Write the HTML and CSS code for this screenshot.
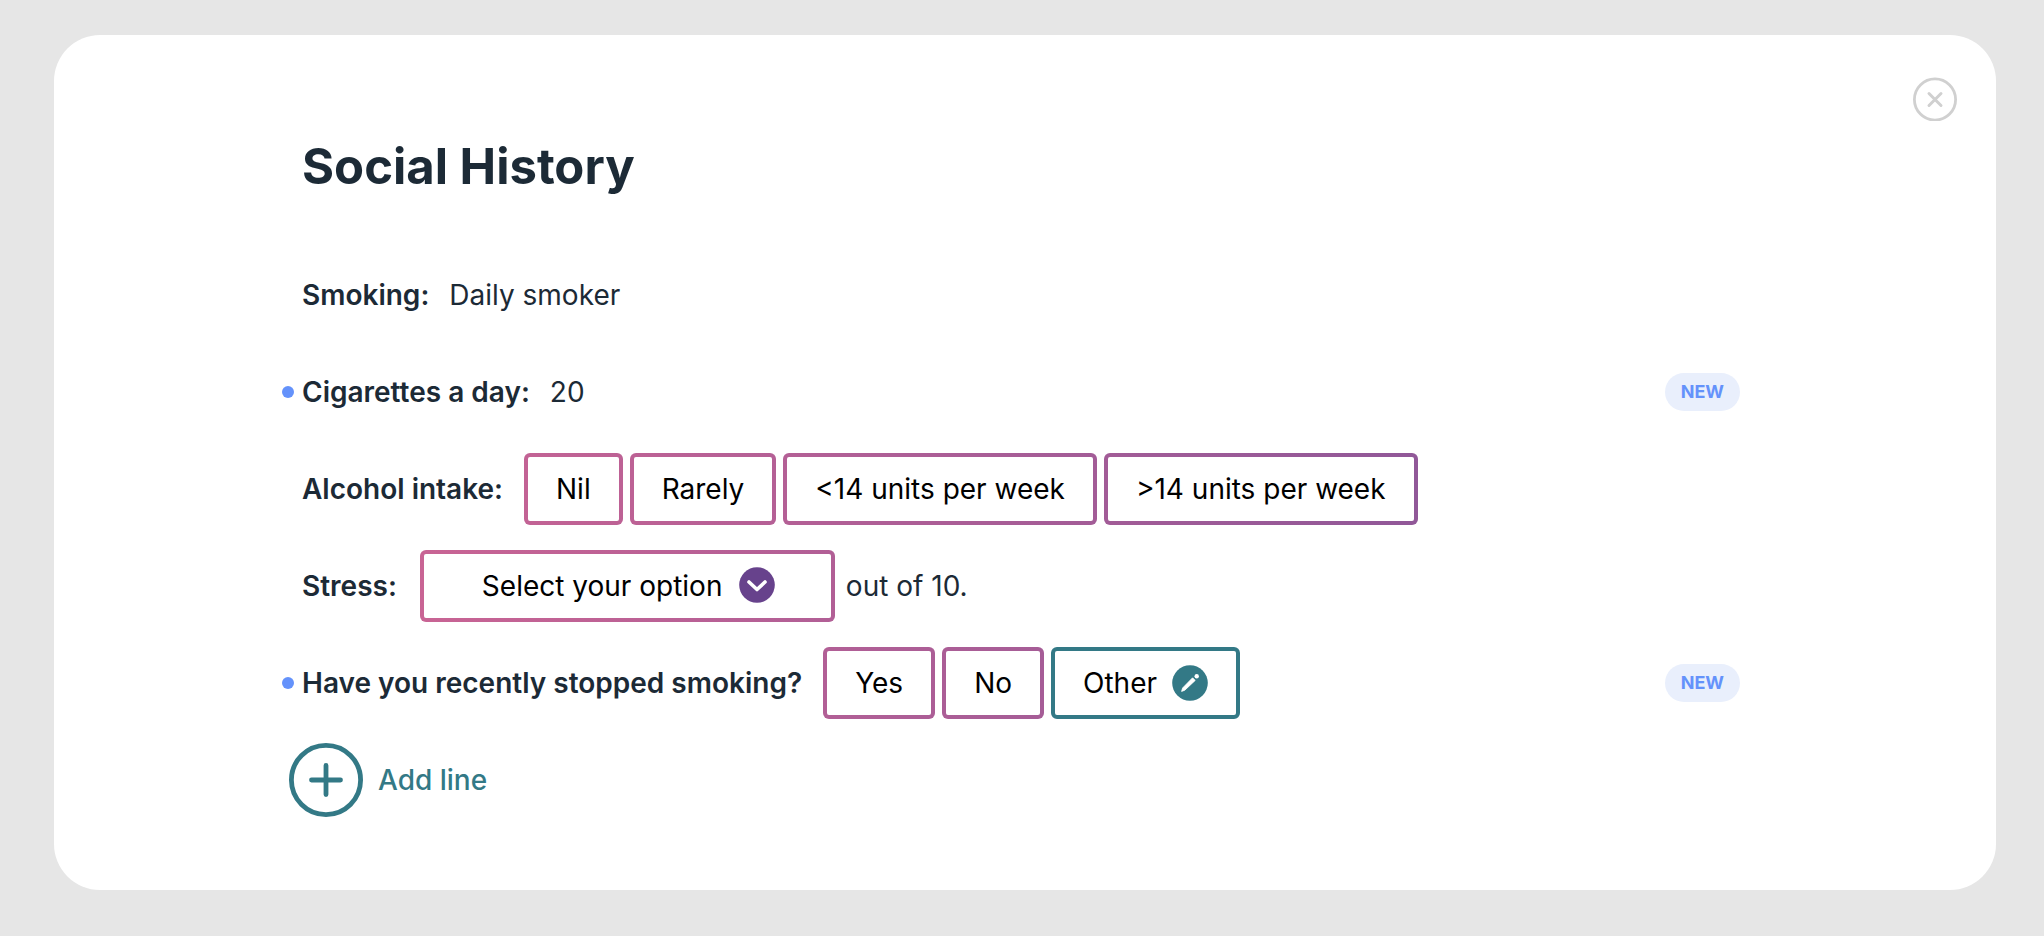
FILE: index.html
```html
<!DOCTYPE html>
<html lang="en">
<head>
<meta charset="utf-8">
<meta name="viewport" content="width=device-width, initial-scale=1">
<title>Social History</title>
<link rel="stylesheet" href="styles.css">
</head>
<body>
<main class="card">
  <header class="card-top">
    <h1 class="title">Social History</h1>
    <button class="close" type="button" aria-label="Close">
      <svg viewBox="0 0 44 44" width="44" height="44" fill="none" stroke="#d0d0d0" stroke-linecap="round">
        <circle cx="22" cy="22.500" r="20.600" stroke-width="2.800"/>
        <path d="M16 16.500l12 12M28 16.500l-12 12" stroke-width="3"/>
      </svg>
    </button>
  </header>
  <div class="lines">
    <div class="line">
      <span class="label">Smoking:</span>
      <span class="value">Daily smoker</span>
    </div>
    <div class="line line-new">
      <span class="label">Cigarettes a day:</span>
      <span class="value">20</span>
      <span class="badge">NEW</span>
    </div>
    <div class="line" role="group" aria-labelledby="alcohol">
      <span class="label" id="alcohol">Alcohol intake:</span>
      <div class="options">
        <button class="option" type="button">Nil</button>
        <button class="option" type="button">Rarely</button>
        <button class="option" type="button">&lt;14 units per week</button>
        <button class="option" type="button">&gt;14 units per week</button>
      </div>
    </div>
    <div class="line">
      <label class="label" for="stress">Stress:</label>
      <div class="picker">
        <select class="select" id="stress">
          <option>Select your option</option>
          <option>1</option><option>2</option><option>3</option><option>4</option><option>5</option>
          <option>6</option><option>7</option><option>8</option><option>9</option><option>10</option>
        </select>
        <svg class="chevron" viewBox="0 0 36 36" width="36" height="36" fill="none">
          <circle cx="18" cy="18" r="17.800" fill="#67428c"/>
          <path d="M10 15l8 7.500 8-7.500" stroke="#fff" stroke-width="3.600" stroke-linecap="round" stroke-linejoin="round"/>
        </svg>
      </div>
      <span class="suffix">out of 10.</span>
    </div>
    <div class="line line-new" role="group" aria-labelledby="stopped">
      <span class="label" id="stopped">Have you recently stopped smoking?</span>
      <div class="options">
        <button class="option" type="button">Yes</button>
        <button class="option" type="button">No</button>
        <button class="option option-other" type="button">Other
          <svg viewBox="0 0 36 36" width="36" height="36">
            <circle cx="18" cy="18" r="17.800" fill="#337986"/>
            <path d="M20.600 12.800l2.600 2.600-10.400 9.800-3.200 1.200 1-3.400z" fill="#fff" stroke="#fff" stroke-width="0.800" stroke-linejoin="round"/>
            <circle cx="24.700" cy="11.300" r="2.200" fill="#fff"/>
          </svg>
        </button>
      </div>
      <span class="badge">NEW</span>
    </div>
    <button class="add" type="button">
      <svg viewBox="0 0 74 74" width="74" height="74" fill="none" stroke="#337986" stroke-linecap="round">
        <circle cx="37" cy="37" r="34.600" stroke-width="4.800"/>
        <path d="M37 22.500v29M22.500 37h29" stroke-width="4.800"/>
      </svg>
      Add line
    </button>
  </div>
</main>
</body>
</html>
```
FILE: styles.css
```css
* { box-sizing: border-box; }

body {
  margin: 0;
  padding: 35px 48px 46px 54px;
  background: #e6e6e6;
  color: #1c2a36;
  font: 400 28px/36px Inter, "Liberation Sans", sans-serif;
}

button, select { font: inherit; cursor: pointer; }

.card {
  padding: 42px 256px 73px 248px;
  border-radius: 46px;
  background: #fff;
}

.card-top {
  display: flex;
  justify-content: space-between;
  align-items: flex-start;
  margin-right: -217px;
}

.title {
  margin: 60px 0 61px;
  font-size: 49px;
  line-height: 60px;
  font-weight: 700;
}

.close {
  display: flex;
  padding: 0;
  border: 0;
  background: none;
}

.lines {
  display: flex;
  flex-direction: column;
  align-items: stretch;
  gap: 24px;
}

.line {
  display: flex;
  align-items: center;
  min-height: 73px;
}

.label { font-weight: 600; white-space: nowrap; }

.value { margin-left: 20px; }

.line-new::before {
  content: "";
  width: 12px;
  height: 12px;
  margin: 0 8px 0 -20px;
  border-radius: 50%;
  background: #6492fb;
}

.badge {
  margin-left: auto;
  padding: 0 16px;
  border-radius: 19px;
  background: #e9effc;
  color: #6492fb;
  font-size: 18px;
  line-height: 38px;
  font-weight: 700;
}

.options {
  display: flex;
  gap: 7px;
  margin-left: 21px;
}

.option, .select {
  height: 72px;
  padding: 0 28px;
  border: 4px solid transparent;
  border-radius: 6px;
  background:
    linear-gradient(#fff, #fff) padding-box,
    linear-gradient(90deg, #c96494 20%, #915898 69%) fixed border-box;
  color: #000;
  white-space: nowrap;
}

.option-other {
  display: flex;
  align-items: center;
  gap: 15px;
  border-color: #337986;
  background: #fff;
}

.picker {
  position: relative;
  margin-left: 23px;
}

.select {
  display: block;
  width: 415px;
  padding: 0 100px 0 58px;
  appearance: none;
}

.chevron {
  position: absolute;
  top: 17px;
  right: 60px;
  pointer-events: none;
}

.suffix { margin-left: 11px; }

.add {
  display: flex;
  align-items: center;
  align-self: flex-start;
  gap: 15px;
  margin-left: -13px;
  padding: 0;
  border: 0;
  background: none;
  color: #337986;
  font-weight: 500;
}
```
